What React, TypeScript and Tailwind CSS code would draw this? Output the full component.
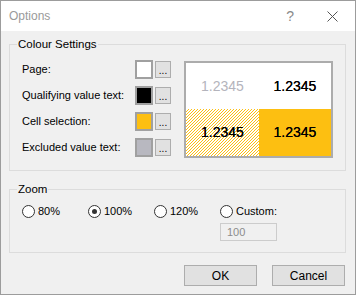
import React from "react";

const ROWS: Array<{ label: string; color: string }> = [
  { label: "Page:", color: "bg-white" },
  { label: "Qualifying value text:", color: "bg-black" },
  { label: "Cell selection:", color: "bg-[#fdbf11]" },
  { label: "Excluded value text:", color: "bg-[#b8b8c0]" },
];

const ZOOMS = [
  { label: "80%", checked: false },
  { label: "100%", checked: true },
  { label: "120%", checked: false },
  { label: "Custom:", checked: false },
];

const font = "font-['Liberation_Sans',Arial,sans-serif]";

function Hatch() {
  return (
    <svg className="absolute inset-0 h-full w-full" shapeRendering="crispEdges">
      <defs>
        <pattern id="hatch" width="3" height="3" patternUnits="userSpaceOnUse">
          <rect x="2" y="0" width="1" height="1" fill="#fdbf11" />
          <rect x="1" y="1" width="1" height="1" fill="#fdbf11" />
          <rect x="0" y="2" width="1" height="1" fill="#fdbf11" />
        </pattern>
      </defs>
      <rect width="100%" height="100%" fill="url(#hatch)" />
    </svg>
  );
}

export default function App() {
  return (
    <div
      className={`flex h-[295px] w-[356px] flex-col border border-[#9c9c9c] bg-[#f0f0f0] text-[11px] text-black ${font}`}
    >
      {/* title bar */}
      <div className="flex h-[30px] shrink-0 items-center bg-white pl-[8px]">
        <span className="text-[12px] text-[#9a9a9a]">Options</span>
        <span className="ml-auto mr-[33px] text-[14px] text-[#8a8a8a]">?</span>
        <svg className="mr-[17px]" width="11" height="11" viewBox="0 0 11 11">
          <path d="M0.5 0.5L10.5 10.5M10.5 0.5L0.5 10.5" stroke="#555" strokeWidth="1" />
        </svg>
      </div>

      <div className="flex flex-col pl-[8px] pr-[9px]">
        <fieldset className="mt-[6px] border border-[#dcdcdc] p-0">
          <legend className="ml-[7px] px-[1px] text-[11.5px] leading-[15px]">Colour Settings</legend>
          <div className="flex pb-[12px] pl-[12px] pt-[8px]">
            <div className="flex flex-col gap-[7px]">
              {ROWS.map((r) => (
                <div key={r.label} className="flex h-[19px] items-center">
                  <span className="w-[113px]">{r.label}</span>
                  <span className={`h-[19px] w-[18px] border-2 border-[#a0a0a0] ${r.color}`} />
                  <span className="ml-[2px] flex h-[17px] w-[16px] items-end justify-center border border-[#adadad] bg-[#e1e1e1] pb-[1px] text-[10px] leading-[10px]">
                    ...
                  </span>
                </div>
              ))}
            </div>
            <div className="ml-[13px] mt-[1px] grid h-[97px] w-[149px] grid-cols-[73px_72px] grid-rows-[46px_47px] border-2 border-[#acacac] text-[14px] [text-shadow:0_0_0.4px_#000]">
              <div className="flex items-center justify-center bg-white text-[#b4b4bc] [text-shadow:none]">1.2345</div>
              <div className="flex items-center justify-center bg-white">1.2345</div>
              <div className="relative flex items-center justify-center bg-white">
                <Hatch />
                <span className="relative">1.2345</span>
              </div>
              <div className="flex items-center justify-center bg-[#fdbf11]">1.2345</div>
            </div>
          </div>
        </fieldset>

        <fieldset className="mt-[11px] border border-[#dcdcdc] p-0">
          <legend className="ml-[7px] px-[1px] text-[11.5px] leading-[15px]">Zoom</legend>
          <div className="flex flex-col pb-[11px] pl-[12px] pt-[8px]">
            <div className="flex h-[13px]">
              {ZOOMS.map((z) => (
                <div key={z.label} className="flex w-[66px] items-center">
                  <span className="flex h-[13px] w-[13px] items-center justify-center rounded-full border border-[#333] bg-white">
                    {z.checked && <span className="h-[5px] w-[5px] rounded-full bg-[#333]" />}
                  </span>
                  <span className="ml-[3px]">{z.label}</span>
                </div>
              ))}
            </div>
            <div className="ml-[198px] mt-[5px] flex h-[18px] w-[57px] items-center border border-[#cccccc] bg-[#f0f0f0] pl-[6px] text-[#8c8c8c]">
              100
            </div>
          </div>
        </fieldset>

        <div className="mt-[12px] flex justify-end gap-[15px] pr-[1px]">
          <button className="h-[21px] w-[73px] border border-[#adadad] bg-[#e1e1e1] text-[12px]">OK</button>
          <button className="h-[21px] w-[73px] border border-[#adadad] bg-[#e1e1e1] text-[12px]">Cancel</button>
        </div>
      </div>
    </div>
  );
}
